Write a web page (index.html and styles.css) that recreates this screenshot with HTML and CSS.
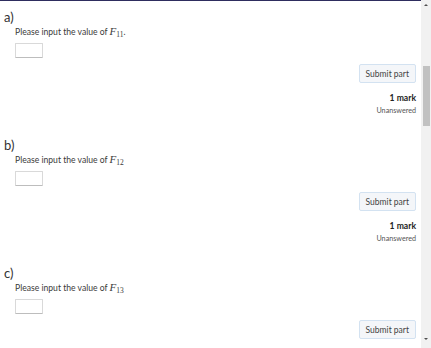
FILE: index.html
```html
<!DOCTYPE html>
<html lang="en">
  <head>
    <meta charset="UTF-8" />
    <meta name="viewport" content="width=device-width, initial-scale=1.0" />
    <title>Question</title>
    <link rel="stylesheet" href="styles.css">
  </head>
  <body>
    <div class="page">
      <div class="part">
        <h2 class="part-name">a)</h2>
        <p class="prompt">Please input the value of <span class="math">F<sub>11</sub></span>.</p>
        <input type="text" class="answer" />
        <div class="part-footer">
          <button class="submit-part">Submit part</button>
          <div class="marks">1 mark</div>
          <div class="status">Unanswered</div>
        </div>
      </div>
      <div class="part">
        <h2 class="part-name">b)</h2>
        <p class="prompt">Please input the value of <span class="math">F<sub>12</sub></span></p>
        <input type="text" class="answer" />
        <div class="part-footer">
          <button class="submit-part">Submit part</button>
          <div class="marks">1 mark</div>
          <div class="status">Unanswered</div>
        </div>
      </div>
      <div class="part">
        <h2 class="part-name">c)</h2>
        <p class="prompt">Please input the value of <span class="math">F<sub>13</sub></span></p>
        <input type="text" class="answer" />
        <div class="part-footer">
          <button class="submit-part">Submit part</button>
        </div>
      </div>
    </div>
    <div class="scrollbar">
      <span class="arrow-up"></span>
      <span class="thumb"></span>
      <span class="arrow-down"></span>
    </div>
  </body>
</html>
```

FILE: styles.css
```css
body {
  margin: 0;
  height: 348px;
  overflow: hidden;
  display: flex;
  font-family: "Lato", sans-serif;
  color: #333;
  background: #fff;
}

.page {
  flex: 1;
  overflow: hidden;
  border-top: 1px solid #2e2d5e;
  padding: 0 5px 0 4px;
}

.part {
  padding: 8px 0 13px;
}

.part-name {
  margin: 0;
  font-size: 13px;
  line-height: 16px;
  font-weight: normal;
  color: #333;
}

.prompt {
  margin: 0 0 0 11px;
  font-size: 8.6px;
  line-height: 12px;
  color: #3a3a3a;
}

.math {
  font-family: "Liberation Serif", serif;
  font-style: italic;
  font-size: 11px;
}

.math sub {
  font-style: normal;
  font-size: 7.5px;
  vertical-align: -2px;
  line-height: 0;
}

.answer {
  display: block;
  box-sizing: border-box;
  width: 28px;
  height: 15px;
  margin: 5px 0 0 11px;
  padding: 0;
  border: 1px solid #d9d9d9;
  border-bottom-color: #bdbdbd;
  border-radius: 1px;
  background: #fff;
}

.part-footer {
  display: flex;
  flex-direction: column;
  align-items: flex-end;
  margin-top: 6px;
}

.submit-part {
  box-sizing: border-box;
  height: 19px;
  padding: 0 6px;
  border: 1px solid #d3e2f1;
  border-radius: 2px;
  background: #f4f6f9;
  font-family: "Lato", sans-serif;
  font-size: 8.5px;
  color: #444;
}

.marks {
  margin-top: 9px;
  font-size: 8.6px;
  line-height: 12px;
  font-weight: bold;
  color: #222;
}

.status {
  margin-top: 2px;
  font-size: 7.2px;
  line-height: 10px;
  color: #555;
}

.scrollbar {
  width: 10px;
  background: #f1f1f1;
  display: flex;
  flex-direction: column;
  align-items: center;
}

.arrow-up {
  margin-top: 4px;
  border-left: 2px solid transparent;
  border-right: 2px solid transparent;
  border-bottom: 2px solid #505050;
}

.thumb {
  margin-top: 60px;
  width: 7px;
  height: 60px;
  background: #c1c1c1;
}

.arrow-down {
  margin-top: auto;
  margin-bottom: 8px;
  border-left: 2px solid transparent;
  border-right: 2px solid transparent;
  border-top: 2px solid #505050;
}
```
